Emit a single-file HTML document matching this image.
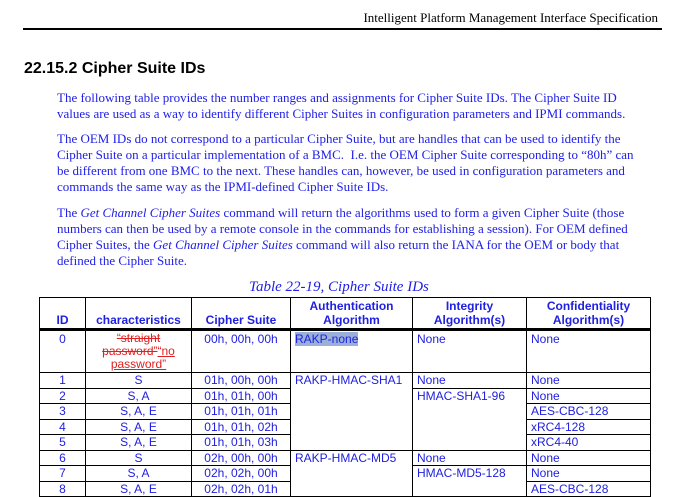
<!DOCTYPE html>
<html><head><style>
body{margin:0;width:696px;height:483px;background:#fff;overflow:hidden;position:relative;font-family:"Liberation Serif",serif}
.a{position:absolute;white-space:nowrap}
.p{color:#2020e8;font-size:13px;left:57px}
table{position:absolute;left:39px;top:297px;border-collapse:collapse;font-family:"Liberation Sans",sans-serif;font-size:12px;color:#2020e0;table-layout:fixed}
td{border:1.3px solid #000;padding:0 4px;height:14.5px;line-height:14px;vertical-align:top;overflow:hidden;white-space:nowrap}
th{border:1.3px solid #000;border-bottom:3px solid #000;font-weight:bold;color:#2020e0;line-height:14px;vertical-align:bottom;padding:1px 2px}
.c{text-align:center}
.r{color:#e02020}
</style></head><body>
<div class="a" style="right:38px;top:10px;font-size:13px">Intelligent Platform Management Interface Specification</div>
<div class="a" style="left:23px;top:28px;width:639px;height:2px;background:#000"></div>
<div class="a" style="left:24px;top:60px;font:bold 16px 'Liberation Sans',sans-serif">22.15.2 Cipher Suite IDs</div>
<div class="a p" style="top:90px;line-height:16px">The following table provides the number ranges and assignments for Cipher Suite IDs. The Cipher Suite ID<br>values are used as a way to identify different Cipher Suites in configuration parameters and IPMI commands.</div>
<div class="a p" style="top:131px;line-height:16px">The OEM IDs do not correspond to a particular Cipher Suite, but are handles that can be used to identify the<br>Cipher Suite on a particular implementation of a BMC.&nbsp; I.e. the OEM Cipher Suite corresponding to “80h” can<br>be different from one BMC to the next. These handles can, however, be used in configuration parameters and<br>commands the same way as the IPMI-defined Cipher Suite IDs.</div>
<div class="a p" style="top:205px;line-height:16px">The <i>Get Channel Cipher Suites</i> command will return the algorithms used to form a given Cipher Suite (those<br>numbers can then be used by a remote console in the commands for establishing a session). For OEM defined<br>Cipher Suites, the <i>Get Channel Cipher Suites</i> command will also return the IANA for the OEM or body that<br>defined the Cipher Suite.</div>
<div class="a" style="left:249px;top:279px;font-size:15px;font-style:italic;color:#2020e8">Table 22-19, Cipher Suite IDs</div>
<table style="width:611px">
<colgroup><col style="width:46px"><col style="width:106px"><col style="width:99px"><col style="width:122px"><col style="width:114px"><col style="width:124px"></colgroup>
<tr style="height:32px"><th>ID</th><th>characteristics</th><th>Cipher Suite</th><th>Authentication<br>Algorithm</th><th>Integrity<br>Algorithm(s)</th><th>Confidentiality<br>Algorithm(s)</th></tr>
<tr style="height:43px"><td class="c" style="padding-top:1px">0</td><td class="c r" style="padding-top:1px;white-space:normal;line-height:13px"><s>“straight<br>password”</s><u>“no<br>password”</u></td><td class="c" style="padding-top:1px">00h, 00h, 00h</td><td style="padding-top:1px"><span style="background:#9ab0d8">RAKP-none</span></td><td style="padding-top:1px">None</td><td style="padding-top:1px">None</td></tr>
<tr><td class="c">1</td><td class="c">S</td><td class="c">01h, 00h, 00h</td><td rowspan="5">RAKP-HMAC-SHA1</td><td>None</td><td>None</td></tr>
<tr><td class="c">2</td><td class="c">S, A</td><td class="c">01h, 01h, 00h</td><td rowspan="4">HMAC-SHA1-96</td><td>None</td></tr>
<tr><td class="c">3</td><td class="c">S, A, E</td><td class="c">01h, 01h, 01h</td><td>AES-CBC-128</td></tr>
<tr><td class="c">4</td><td class="c">S, A, E</td><td class="c">01h, 01h, 02h</td><td>xRC4-128</td></tr>
<tr><td class="c">5</td><td class="c">S, A, E</td><td class="c">01h, 01h, 03h</td><td>xRC4-40</td></tr>
<tr><td class="c">6</td><td class="c">S</td><td class="c">02h, 00h, 00h</td><td rowspan="3">RAKP-HMAC-MD5</td><td>None</td><td>None</td></tr>
<tr><td class="c">7</td><td class="c">S, A</td><td class="c">02h, 02h, 00h</td><td rowspan="2">HMAC-MD5-128</td><td>None</td></tr>
<tr><td class="c">8</td><td class="c">S, A, E</td><td class="c">02h, 02h, 01h</td><td>AES-CBC-128</td></tr>
</table>
</body></html>
